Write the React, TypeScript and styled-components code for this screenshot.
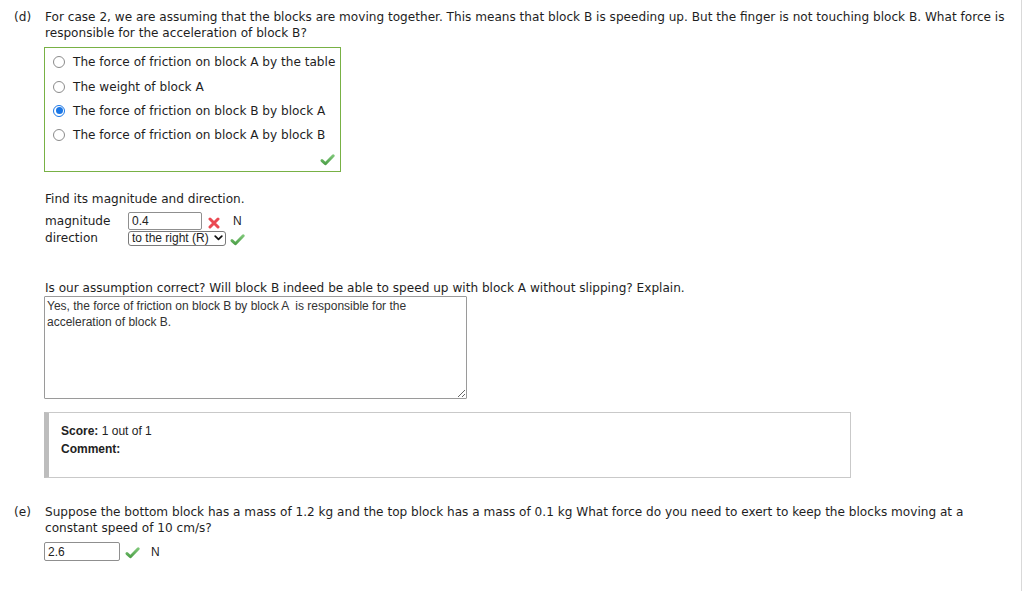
import React from 'react';
import styled, { createGlobalStyle } from 'styled-components';

const GlobalStyle = createGlobalStyle`
  html, body {
    margin: 0;
    padding: 0;
    background: #ffffff;
  }
`;

const Page = styled.div`
  box-sizing: border-box;
  width: 1022px;
  min-height: 591px;
  padding: 9px 12px 0 14px;
  border-right: 1px solid #d9d9d9;
  font-family: 'DejaVu Sans', Verdana, sans-serif;
  font-size: 12.1px;
  line-height: 16px;
  color: #1e1e1e;
`;

const Part = styled.section<{ $gap?: number }>`
  display: flex;
  margin-top: ${(p) => p.$gap ?? 0}px;
`;

const PartLabel = styled.div`
  flex: none;
  width: 30px;
`;

const PartBody = styled.div`
  flex: 1;
  min-width: 0;
`;

const Prompt = styled.p<{ $gap?: number }>`
  margin: ${(p) => p.$gap ?? 0}px 0 0 1px;
`;

const Choices = styled.div`
  box-sizing: border-box;
  width: 297px;
  margin-top: 6px;
  padding: 2px 5px 0 8px;
  border: 1px solid #78b145;
  display: flex;
  flex-direction: column;
`;

const Choice = styled.label`
  display: flex;
  align-items: center;
  gap: 8px;
  height: 24.4px;
  white-space: nowrap;
  cursor: pointer;
`;

const Radio = styled.span<{ $checked?: boolean }>`
  box-sizing: border-box;
  flex: none;
  position: relative;
  width: 12px;
  height: 12px;
  border-radius: 50%;
  border: 1px solid ${(p) => (p.$checked ? '#1b77e6' : '#8b8b8b')};
  background: #fff;

  &::after {
    content: '';
    display: ${(p) => (p.$checked ? 'block' : 'none')};
    position: absolute;
    inset: 1.5px;
    border-radius: 50%;
    background: #1b77e6;
  }
`;

const ChoiceMark = styled.div`
  display: flex;
  justify-content: flex-end;
  align-items: flex-end;
  height: 23.5px;
  padding-bottom: 5px;
  box-sizing: border-box;
`;

const FieldRow = styled.div`
  display: flex;
  align-items: center;
  margin-left: 1px;
`;

const FieldLabel = styled.span`
  flex: none;
  width: 83px;
`;

const TextInput = styled.input<{ $width: number }>`
  box-sizing: border-box;
  width: ${(p) => p.$width}px;
  height: ${(p) => (p.$width > 74 ? 19 : 18)}px;
  margin: 0;
  padding: 0 3px;
  border: 1px solid #8f8f8f;
  border-radius: 2px;
  font-family: 'Liberation Sans', Arial, sans-serif;
  font-size: 12px;
  color: #222;
  background: #fff;
`;

const SelectWrap = styled.span`
  position: relative;
  display: inline-flex;
`;

const Select = styled.select`
  box-sizing: border-box;
  appearance: none;
  width: 98px;
  height: 15px;
  margin: 0;
  padding: 0 14px 0 3px;
  border: 1px solid #7a7a7a;
  border-radius: 3px;
  font-family: 'Liberation Sans', Arial, sans-serif;
  font-size: 12px;
  line-height: 13px;
  color: #222;
  background: #fff;
`;

const Chevron = styled.svg`
  position: absolute;
  right: 3px;
  top: 4px;
  pointer-events: none;
`;

const Unit = styled.span<{ $gap: number }>`
  margin-left: ${(p) => p.$gap}px;
  font-family: 'Liberation Sans', Arial, sans-serif;
  font-size: 12px;
`;

const IconSlot = styled.span<{ $gap: number; $dy?: number }>`
  display: inline-flex;
  margin-left: ${(p) => p.$gap}px;
  margin-top: ${(p) => p.$dy ?? 0}px;
`;

const Answer = styled.textarea`
  display: block;
  box-sizing: border-box;
  width: 423px;
  height: 103px;
  margin: 0;
  padding: 1px 2px;
  border: 1px solid #9a9a9a;
  border-radius: 1px;
  font-family: 'Liberation Sans', Arial, sans-serif;
  font-size: 12px;
  line-height: 16px;
  color: #333;
  resize: both;
`;

const ScoreBox = styled.div`
  box-sizing: border-box;
  width: 807px;
  height: 66px;
  margin-top: 13px;
  padding: 9px 12px;
  border: 1px solid #c9c9c9;
  border-left: 5px solid #bdbdbd;
  font-family: 'Liberation Sans', Arial, sans-serif;
  font-size: 12px;
  line-height: 18px;
  color: #222;
`;

const ScoreLine = styled.div``;

const Strong = styled.b`
  font-weight: bold;
`;

const CheckIcon = () => (
  <svg width="15" height="12" viewBox="0 0 15 12" aria-hidden="true">
    <defs>
      <linearGradient id="chk" x1="0" y1="0" x2="0" y2="1">
        <stop offset="0" stopColor="#7cc576" />
        <stop offset="1" stopColor="#4fa14a" />
      </linearGradient>
    </defs>
    <path
      d="M2 6.6 L5.4 9.8 L13.2 1.8"
      fill="none"
      stroke="url(#chk)"
      strokeWidth="2.9"
      strokeLinecap="round"
      strokeLinejoin="round"
    />
  </svg>
);

const CrossIcon = () => (
  <svg width="12" height="12" viewBox="0 0 12 12" aria-hidden="true">
    <path
      d="M2 2 L10 10 M10 2 L2 10"
      fill="none"
      stroke="#ea4a52"
      strokeWidth="3"
      strokeLinecap="round"
    />
  </svg>
);

const options = [
  'The force of friction on block A by the table',
  'The weight of block A',
  'The force of friction on block B by block A',
  'The force of friction on block A by block B',
];

const App: React.FC = function () {
  return (
    <>
      <GlobalStyle />
      <Page>
        <Part>
          <PartLabel>(d)</PartLabel>
          <PartBody>
            <Prompt>
              For case 2, we are assuming that the blocks are moving together. This means that
              block B is speeding up. But the finger is not touching block B. What force is
              responsible for the acceleration of block B?
            </Prompt>
            <Choices>
              {options.map((text, i) => (
                <Choice key={text}>
                  <Radio $checked={i === 2} />
                  {text}
                </Choice>
              ))}
              <ChoiceMark>
                <CheckIcon />
              </ChoiceMark>
            </Choices>

            <Prompt $gap={19}>Find its magnitude and direction.</Prompt>
            <FieldRow style={{ marginTop: 5 }}>
              <FieldLabel>magnitude</FieldLabel>
              <TextInput $width={74} defaultValue="0.4" />
              <IconSlot $gap={6} $dy={3}>
                <CrossIcon />
              </IconSlot>
              <Unit $gap={13}>N</Unit>
            </FieldRow>
            <FieldRow>
              <FieldLabel>direction</FieldLabel>
              <SelectWrap>
                <Select defaultValue="R">
                  <option value="R">to the right (R)</option>
                  <option value="L">to the left (L)</option>
                </Select>
                <Chevron width="9" height="6" viewBox="0 0 9 6" aria-hidden="true">
                  <path
                    d="M1.2 1.2 L4.5 4.4 L7.8 1.2"
                    fill="none"
                    stroke="#111"
                    strokeWidth="1.7"
                    strokeLinecap="round"
                    strokeLinejoin="round"
                  />
                </Chevron>
              </SelectWrap>
              <IconSlot $gap={4} $dy={4}>
                <CheckIcon />
              </IconSlot>
            </FieldRow>

            <Prompt $gap={34}>
              Is our assumption correct? Will block B indeed be able to speed up with block A
              without slipping? Explain.
            </Prompt>
            <Answer
              defaultValue={
                'Yes, the force of friction on block B by block A  is responsible for the acceleration of block B.'
              }
            />
            <ScoreBox>
              <ScoreLine>
                <Strong>Score:</Strong> 1 out of 1
              </ScoreLine>
              <ScoreLine>
                <Strong>Comment:</Strong>
              </ScoreLine>
            </ScoreBox>
          </PartBody>
        </Part>

        <Part $gap={26}>
          <PartLabel>(e)</PartLabel>
          <PartBody>
            <Prompt>
              Suppose the bottom block has a mass of 1.2 kg and the top block has a mass of 0.1 kg
              What force do you need to exert to keep the blocks moving at a constant speed of 10
              cm/s?
            </Prompt>
            <FieldRow style={{ marginTop: 6, marginLeft: 0 }}>
              <TextInput $width={76} defaultValue="2.6" />
              <IconSlot $gap={5} $dy={2}>
                <CheckIcon />
              </IconSlot>
              <Unit $gap={11}>N</Unit>
            </FieldRow>
          </PartBody>
        </Part>
      </Page>
    </>
  );
};

export default App;
